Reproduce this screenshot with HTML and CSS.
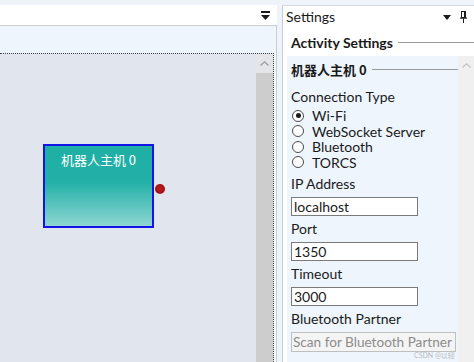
FILE: index.html
```html
<!DOCTYPE html>
<html>
<head>
<meta charset="utf-8">
<link rel="stylesheet" href="styles.css">
</head>
<body>
<div class="app">
  <div class="left">
    <div class="left-head">
      <svg class="menu-icon" width="9" height="10" viewBox="0 0 9 10"><rect x="0" y="0" width="9" height="2" fill="#1a1a1a"/><polygon points="0,4 9,4 4.5,9" fill="#1a1a1a"/></svg>
    </div>
    <div class="left-body">
      <div class="band"></div>
      <div class="canvas-wrap">
        <div class="canvas">
          <div class="node">
            <span class="node-title">机器人主机 0</span>
            <span class="port"></span>
          </div>
        </div>
        <div class="vscroll">
          <div class="vscroll-btn">
            <svg width="9" height="5" viewBox="0 0 9 5"><polyline points="0.5,4.5 4.5,0.8 8.5,4.5" fill="none" stroke="#9a9a9a" stroke-width="1.2"/></svg>
          </div>
          <div class="vscroll-thumb"></div>
        </div>
      </div>
    </div>
  </div>
  <div class="right">
    <div class="right-head">
      <span class="title">Settings</span>
      <svg class="drop" width="8" height="5" viewBox="0 0 8 5"><polygon points="0,0 8,0 4,5" fill="#1a1a1a"/></svg>
      <svg class="pin" width="7" height="12" viewBox="0 0 7 12"><rect x="1.5" y="0.5" width="4" height="6" fill="none" stroke="#1a1a1a" stroke-width="1"/><rect x="4" y="1" width="1.5" height="5.5" fill="#1a1a1a"/><rect x="0" y="6.5" width="7" height="1.2" fill="#1a1a1a"/><rect x="3" y="7.5" width="1" height="4.5" fill="#1a1a1a"/></svg>
    </div>
    <div class="section-head">
      <span class="bold">Activity Settings</span>
      <span class="rule"></span>
    </div>
    <div class="props">
      <div class="props-content">
        <div class="group-head">
          <span class="bold cjk">机器人主机 0</span>
          <span class="rule"></span>
        </div>
        <div class="label first">Connection Type</div>
        <div class="radios">
          <div class="radio"><span class="dot checked"></span>Wi-Fi</div>
          <div class="radio"><span class="dot"></span>WebSocket Server</div>
          <div class="radio"><span class="dot"></span>Bluetooth</div>
          <div class="radio"><span class="dot"></span>TORCS</div>
        </div>
        <div class="label gap">IP Address</div>
        <div class="input">localhost</div>
        <div class="label">Port</div>
        <div class="input">1350</div>
        <div class="label">Timeout</div>
        <div class="input">3000</div>
        <div class="label">Bluetooth Partner</div>
        <div class="button">Scan for Bluetooth Partner</div>
        <div class="watermark">CSDN @以轻</div>
      </div>
      <div class="vscroll2">
        <svg width="9" height="5" viewBox="0 0 9 5"><polyline points="0.5,4.5 4.5,0.8 8.5,4.5" fill="none" stroke="#c4c4c4" stroke-width="1.2"/></svg>
      </div>
    </div>
  </div>
</div>
</body>
</html>
```
FILE: styles.css
```css
html, body {
  margin: 0;
  padding: 0;
}
body {
  width: 474px;
  height: 362px;
  overflow: hidden;
  background: #eef4fa;
  font-family: Lato, "Noto Sans CJK SC", sans-serif;
  font-size: 14px;
  color: #1a1a1a;
}
.app {
  display: flex;
  padding-top: 5px;
  height: 357px;
  gap: 5px;
}
.left {
  width: 277px;
  display: flex;
  flex-direction: column;
}
.left-head {
  height: 20px;
  background: #ffffff;
  border-bottom: 1px solid #c9ccd0;
  display: flex;
  align-items: center;
  justify-content: flex-end;
  padding-right: 7px;
}
.menu-icon {
  margin-top: 1px;
}
.left-body {
  flex: 1;
  display: flex;
  flex-direction: column;
  border-right: 1px solid #c9ccd0;
  background: #f6f9fc;
}
.band {
  height: 27px;
  background: #eef5fd;
}
.canvas-wrap {
  flex: 1;
  display: flex;
  width: 273px;
  border-top: 1px dotted #444;
  border-right: 1px dotted #444;
  background: #e1e5ee;
}
.canvas {
  position: relative;
  flex: 1;
}
.vscroll {
  width: 17px;
  display: flex;
  flex-direction: column;
}
.vscroll-btn {
  height: 19px;
  background: #e3e5e8;
  display: flex;
  align-items: center;
  justify-content: center;
}
.vscroll-thumb {
  flex: 1;
  background: #cdcdcd;
}
.node {
  position: absolute;
  left: 43px;
  top: 90px;
  width: 107px;
  height: 80px;
  border: 2px solid #1414e6;
  background: linear-gradient(to bottom, #1fafa5 0%, #22b0a7 45%, #8ed6d2 100%);
  text-align: center;
}
.node-title {
  display: block;
  margin-top: 5px;
  color: #ffffff;
  font-family: "Noto Sans CJK SC", sans-serif;
  font-size: 13px;
  line-height: 18px;
}
.port {
  position: absolute;
  left: 110px;
  top: 38px;
  width: 10px;
  height: 10px;
  border-radius: 50%;
  background: radial-gradient(circle at 50% 45%, #c41a1f 0%, #a01217 60%, #7a0c10 100%);
}
.right {
  flex: 1;
  display: flex;
  flex-direction: column;
  background: #ffffff;
  border-left: 1px solid #c9ccd0;
  border-top: 1px solid #d6dae0;
}
.right-head {
  height: 22px;
  display: flex;
  align-items: center;
  padding-left: 3px;
  padding-right: 7px;
}
.title {
  flex: 1;
  line-height: 20px;
}
.drop {
  margin-right: 9px;
  margin-top: 1px;
}
.section-head {
  height: 28px;
  display: flex;
  align-items: center;
  padding-left: 8px;
}
.bold {
  font-weight: 700;
  white-space: nowrap;
}
.rule {
  flex: 1;
  height: 1px;
  background: #9a9a9a;
  margin-left: 5px;
}
.props {
  flex: 1;
  display: flex;
  margin-left: 4px;
  background: #eef5fc;
}
.props-content {
  flex: 1;
  padding-left: 4px;
  position: relative;
}
.group-head {
  height: 27px;
  display: flex;
  align-items: center;
}
.cjk {
  font-family: "Noto Sans CJK SC", sans-serif;
  font-size: 13px;
}
.label {
  height: 18px;
  line-height: 18px;
  margin-top: 4px;
}
.label.first {
  margin-top: 5px;
}
.label.gap {
  margin-top: 5px;
}
.radios {
  margin-top: 2px;
}
.radio {
  height: 15.5px;
  line-height: 15.5px;
  display: flex;
  align-items: center;
}
.dot {
  width: 10px;
  height: 10px;
  border: 1px solid #4a4a4a;
  border-radius: 50%;
  background: #ffffff;
  margin-left: 1px;
  margin-right: 8px;
  position: relative;
}
.dot.checked::after {
  content: "";
  position: absolute;
  left: 2.5px;
  top: 2.5px;
  width: 5px;
  height: 5px;
  border-radius: 50%;
  background: #1a1a1a;
}
.input {
  width: 123px;
  height: 17px;
  line-height: 17px;
  margin-top: 4px;
  border: 1px solid #7a7a7a;
  background: #ffffff;
  padding-left: 2px;
}
.button {
  width: 162px;
  height: 18px;
  line-height: 18px;
  margin-top: 4px;
  border: 1px solid #bfbfbf;
  background: #f4f4f4;
  color: #8c8c8c;
  padding-left: 1px;
  font-size: 13.6px;
  white-space: nowrap;
  overflow: hidden;
}
.watermark {
  position: absolute;
  left: 127px;
  top: 295px;
  font-size: 7px;
  line-height: 8px;
  color: #b8bcc4;
  white-space: nowrap;
}
.vscroll2 {
  width: 16px;
  background: #f0f0f0;
  display: flex;
  justify-content: center;
  padding-top: 7px;
  box-sizing: border-box;
}
```
